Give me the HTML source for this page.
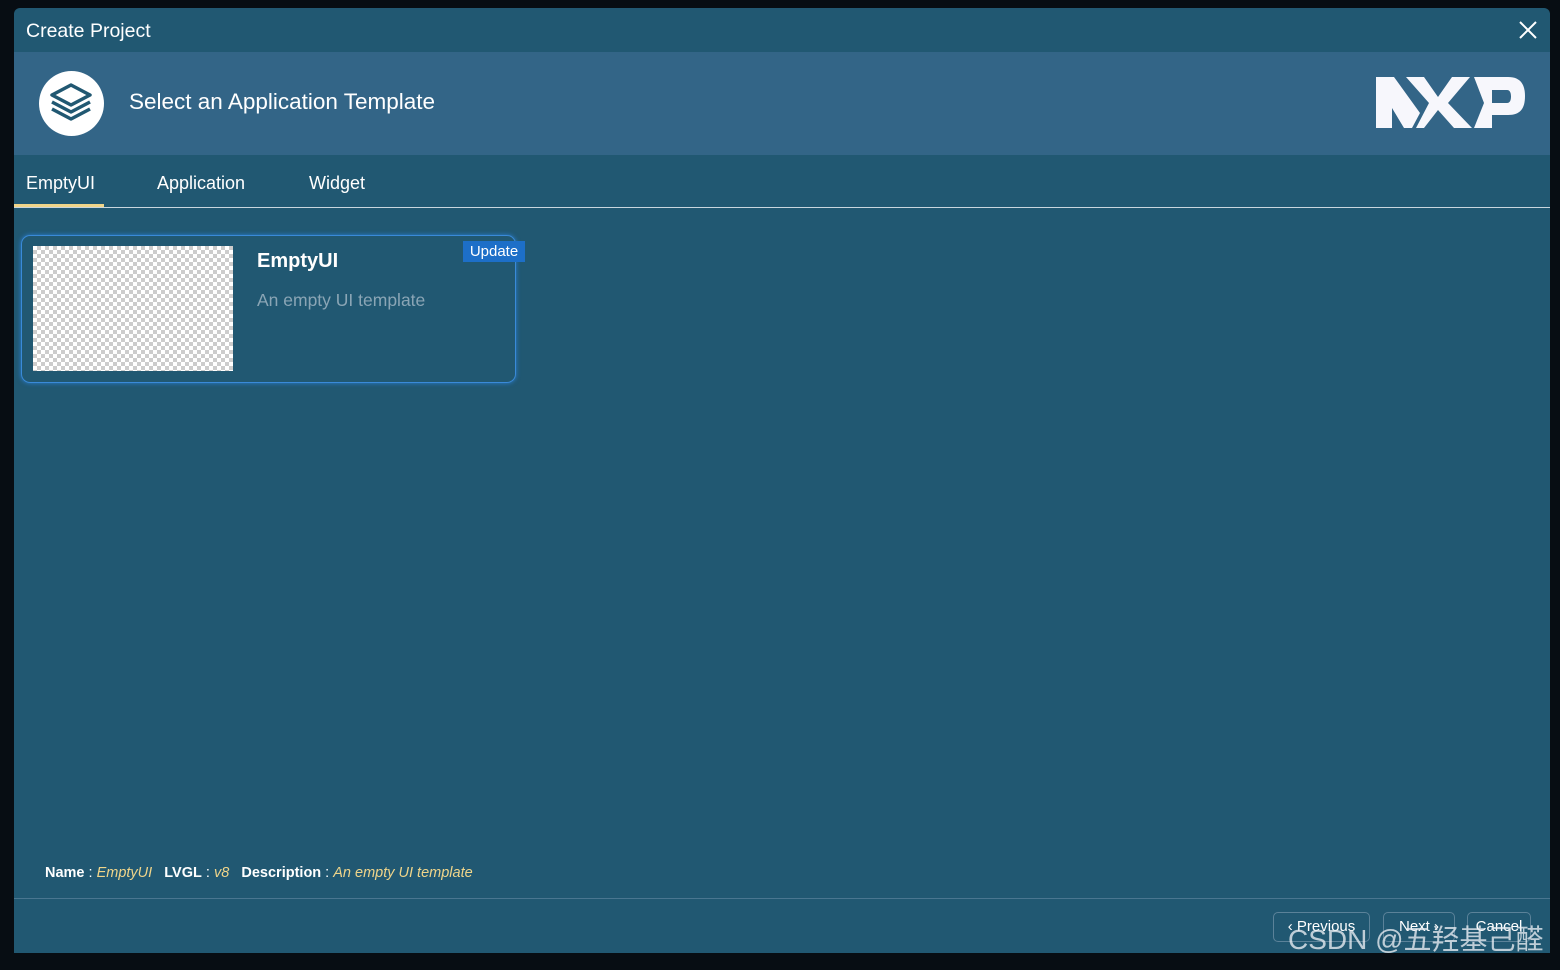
<!DOCTYPE html>
<html><head><meta charset="utf-8"><style>
*{margin:0;padding:0;box-sizing:border-box}
html,body{width:1560px;height:970px;overflow:hidden}
body{background:#070d13;position:relative;font-family:"Liberation Sans",sans-serif;color:#fff}
#dlg{position:absolute;left:14px;top:8px;width:1536px;height:945px;background:#215872;border-radius:6px 6px 0 0;overflow:hidden}
.title{position:absolute;left:12px;top:12px;font-size:19.5px;color:#fff}
.close{position:absolute;right:12px;top:12px}
.hdr{position:absolute;left:0;top:44px;width:1536px;height:103px;background:#336587}
.logo{position:absolute;left:25px;top:19px;width:65px;height:65px;border-radius:50%;background:#fff}
.htxt{position:absolute;left:115px;top:37px;font-size:22.5px}
.tabs{position:absolute;left:0;top:147px;width:1536px;height:53px;border-bottom:1px solid #c9d6de}
.tab{position:absolute;top:18px;font-size:18px}
.ul{position:absolute;left:0;top:49px;width:90px;height:3px;background:#f0d58a}
.card{position:absolute;left:7px;top:227px;width:495px;height:148px;border:1px solid #3a8ad8;border-radius:9px;box-shadow:0 0 5px #2a7fd6}
.thumb{position:absolute;left:11px;top:10px;width:200px;height:125px;background-color:#fff;background-image:linear-gradient(45deg,#ccc 25%,transparent 25%,transparent 75%,#ccc 75%),linear-gradient(45deg,#ccc 25%,transparent 25%,transparent 75%,#ccc 75%);background-size:8px 8px;background-position:0 0,4px 4px}
.ct{position:absolute;left:235px;top:14px;font-size:20px;font-weight:bold}
.cd{position:absolute;left:235px;top:54px;font-size:17.5px;color:#8aa5b5}
.badge{position:absolute;left:449px;top:233px;width:62px;height:21px;background:#1d6fc8;font-size:15px;text-align:center;line-height:21px}
.info{position:absolute;left:31px;top:857px;font-size:14.5px;white-space:nowrap}
.info i{color:#f0d58a}
.sep{position:absolute;left:0;top:890px;width:1536px;height:1px;background:#4a7690}
.btn{position:absolute;top:904px;height:30px;border:1px solid #5b8299;border-radius:5px;font-size:15px;line-height:28px;text-align:center}
.wm{position:absolute;left:1288px;top:922px;font-size:28px;white-space:nowrap;color:rgba(230,235,240,.8);font-family:"Liberation Sans","Noto Sans CJK SC",sans-serif;line-height:36px}
</style></head><body>
<div id="dlg">
<div class="title">Create Project</div>
<svg class="close" width="20" height="20" viewBox="0 0 20 20"><path d="M2 2L18 18M18 2L2 18" stroke="#fff" stroke-width="2"/></svg>
<div class="hdr">
<div class="logo"><svg width="65" height="65" viewBox="0 0 65 65"><g fill="none" stroke="#215872" stroke-width="3.5" stroke-linejoin="round"><path d="M32 14L51 24L32 34L13 24Z"/><path d="M13 31L32 41L51 31"/><path d="M13 38L32 48L51 38"/></g></svg></div>
<div class="htxt">Select an Application Template</div>
<svg style="position:absolute;left:1362px;top:25px" width="150" height="52" viewBox="0 0 150 52"><path fill="#f7f7fc" fill-rule="evenodd" d="M0 0H18L44 36L36 51H28L16 31V51H0Z M30 0H48L62 20L76 0H94L72 26L96 51H78L62 33L48 51H40L53 26Z M98 0H132C145 0 149 8 149 19C149 32 144 38 132 38H116V51H98L108 26Z M116 13H131C134 13 135 16 135 19.5C135 23 134 26 131 26H116Z"/></svg>
</div>
<div class="tabs">
<div class="tab" style="left:12px">EmptyUI</div>
<div class="tab" style="left:143px">Application</div>
<div class="tab" style="left:295px">Widget</div>
<div class="ul"></div>
</div>
<div class="card"><div class="thumb"></div><div class="ct">EmptyUI</div><div class="cd">An empty UI template</div></div>
<div class="badge">Update</div>
<div class="info"><b>Name</b> : <i>EmptyUI</i> &nbsp; <b>LVGL</b> : <i>v8</i> &nbsp; <b>Description</b> : <i>An empty UI template</i></div>
<div class="sep"></div>
<div class="btn" style="left:1259px;width:97px">&lsaquo; Previous</div>
<div class="btn" style="left:1369px;width:72px">Next &rsaquo;</div>
<div class="btn" style="left:1453px;width:64px">Cancel</div>
</div>
<div class="wm">CSDN @五羟基己醛</div>
</body></html>
